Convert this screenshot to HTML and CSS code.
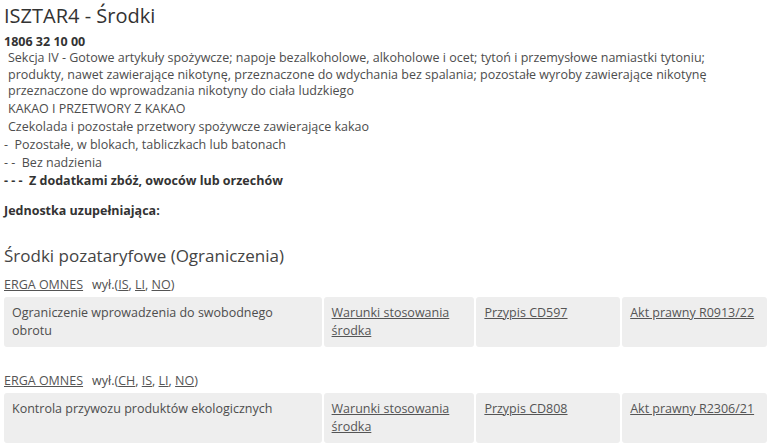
FILE: index.html
```html
<!DOCTYPE html>
<html lang="pl">
<head>
<meta charset="utf-8">
<title>ISZTAR4 - Środki</title>
<link rel="stylesheet" href="styles.css">
</head>
<body>
<div class="page">
  <h1 class="title">ISZTAR4 - Środki</h1>
  <div class="code">1806 32 10 00</div>
  <div class="desc">
    <div class="item lvl0">Sekcja IV - Gotowe artykuły spożywcze; napoje bezalkoholowe, alkoholowe i ocet; tytoń i przemysłowe namiastki tytoniu; produkty, nawet zawierające nikotynę, przeznaczone do wdychania bez spalania; pozostałe wyroby zawierające nikotynę przeznaczone do wprowadzania nikotyny do ciała ludzkiego</div>
    <div class="item lvl0">KAKAO I PRZETWORY Z KAKAO</div>
    <div class="item lvl0">Czekolada i pozostałe przetwory spożywcze zawierające kakao</div>
    <div class="item">-&nbsp; Pozostałe, w blokach, tabliczkach lub batonach</div>
    <div class="item">- -&nbsp; Bez nadzienia</div>
    <div class="item current">- - -&nbsp; Z dodatkami zbóż, owoców lub orzechów</div>
  </div>
  <div class="unit">Jednostka uzupełniająca:</div>

  <h2 class="section">Środki pozataryfowe (Ograniczenia)</h2>

  <div class="measure">
    <div class="geo"><a href="#">ERGA OMNES</a><span class="excl">wył.(<a href="#">IS</a>, <a href="#">LI</a>, <a href="#">NO</a>)</span></div>
    <div class="cells">
      <div class="cell">Ograniczenie wprowadzenia do swobodnego obrotu</div>
      <div class="cell"><a href="#">Warunki stosowania środka</a></div>
      <div class="cell"><a href="#">Przypis CD597</a></div>
      <div class="cell"><a href="#">Akt prawny R0913/22</a></div>
    </div>
  </div>

  <div class="measure">
    <div class="geo"><a href="#">ERGA OMNES</a><span class="excl">wył.(<a href="#">CH</a>, <a href="#">IS</a>, <a href="#">LI</a>, <a href="#">NO</a>)</span></div>
    <div class="cells">
      <div class="cell">Kontrola przywozu produktów ekologicznych</div>
      <div class="cell"><a href="#">Warunki stosowania środka</a></div>
      <div class="cell"><a href="#">Przypis CD808</a></div>
      <div class="cell"><a href="#">Akt prawny R2306/21</a></div>
    </div>
  </div>
</div>
</body>
</html>
```

FILE: styles.css
```css
html, body {
  margin: 0;
  padding: 0;
  background: #fff;
}

body {
  font-family: "Open Sans", "DejaVu Sans", sans-serif;
  font-size: 12.5px;
  color: #4d4d4d;
}

.page {
  padding: 4px 1px 0 4px;
}

.title {
  margin: 0;
  font-size: 20px;
  font-weight: 400;
  line-height: 24px;
  color: #333;
}

.code {
  margin-top: 6px;
  font-weight: 700;
  line-height: 16px;
  color: #333;
}

.desc {
  max-width: 720px;
}

.item {
  line-height: 16.5px;
  margin-bottom: 1.5px;
}

.item.lvl0 {
  padding-left: 4px;
}

.item.current {
  font-weight: 700;
  color: #333;
}

.unit {
  margin-top: 12px;
  font-weight: 700;
  line-height: 17px;
  color: #333;
}

.section {
  margin: 25px 0 0;
  font-size: 17px;
  font-weight: 400;
  line-height: 24px;
  color: #444;
}

.measure {
  margin-top: 8px;
}

.measure + .measure {
  margin-top: 25px;
}

.geo {
  line-height: 18px;
  margin-bottom: 3px;
}

.geo a,
.cells a {
  color: #555;
  text-decoration: underline;
}

.excl {
  margin-left: 9px;
}

.cells {
  display: grid;
  grid-template-columns: 318fr 151fr 144fr 145fr;
  gap: 2px;
}

.cell {
  background: #eee;
  border-radius: 3px;
  padding: 7px 8px;
  min-height: 36px;
  line-height: 18px;
}
```
